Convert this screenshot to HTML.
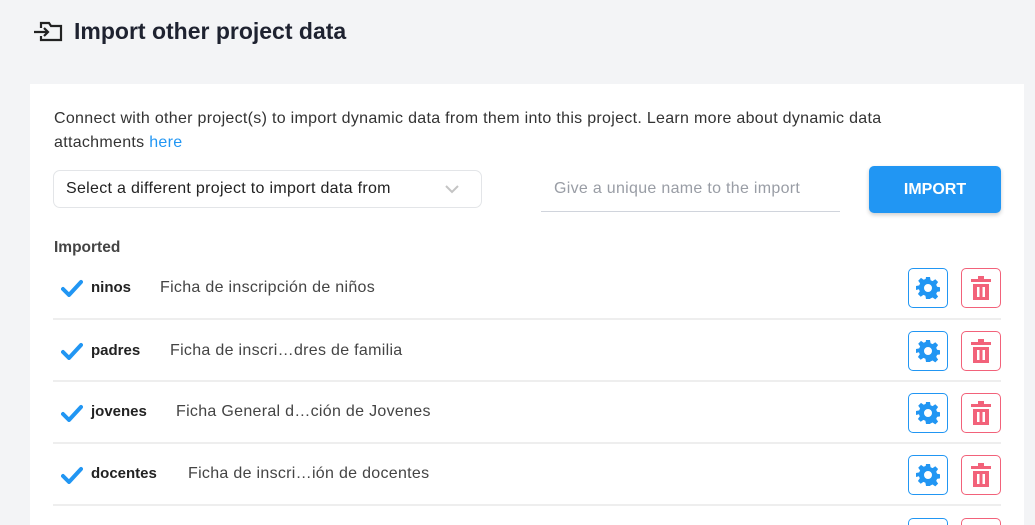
<!DOCTYPE html>
<html><head><meta charset="utf-8"><style>
*{margin:0;padding:0;box-sizing:border-box}
html,body{width:1035px;height:525px;overflow:hidden}
body{background:#f3f4f6;font-family:"Liberation Sans",sans-serif;position:relative;color:#333}
.a{position:absolute}
.card{left:30px;top:84px;width:994px;height:441px;background:#fff}
.sep{left:53px;width:948px;height:2px;background:#eeeeee}
.btn{width:40px;height:40px;border-radius:5px;border:1px solid;display:flex;align-items:center;justify-content:center}
.g{left:908px;border-color:#2196f3}
.t{left:961px;border-color:#f2627a}
.name{font-size:15px;font-weight:bold;color:#222}
.w{font-size:16px;letter-spacing:.3px}
.desc{color:#444}
</style></head><body>
<svg class="a" style="left:33px;top:21px" width="32" height="24" viewBox="0 0 32 24" fill="none" stroke="#222" stroke-width="2.2"><path d="M1 11h14M11 7l4 4-4 4"/><path d="M8 7V2h8l2 3h10v14H8v-4"/></svg>
<div class="a" style="left:74px;top:18px;font-size:23px;font-weight:bold;color:#1e2230">Import other project data</div>
<div class="a card"></div>
<div class="a w" style="left:54px;top:107px;width:880px;line-height:24px;color:#333">Connect with other project(s) to import dynamic data from them into this project. Learn more about dynamic data attachments <span style="color:#2196f3">here</span></div>
<div class="a" style="left:53px;top:170px;width:429px;height:38px;border:1px solid #e3e5e8;border-radius:7px"></div>
<div class="a w" style="left:66px;top:180px;color:#222">Select a different project to import data from</div>
<svg class="a" style="left:445px;top:185px" width="14" height="9" viewBox="0 0 14 9" fill="none" stroke="#c4c4c4" stroke-width="2"><path d="M1 1l6 6 6-6"/></svg>
<div class="a w" style="left:554px;top:180px;color:#999da5">Give a unique name to the import</div>
<div class="a" style="left:541px;top:211px;width:299px;height:1px;background:#d0d4dc"></div>
<div class="a" style="left:869px;top:166px;width:132px;height:47px;background:#2196f3;border-radius:5px;box-shadow:0 2px 4px rgba(0,0,0,.2);color:#fff;font-weight:bold;font-size:16px;display:flex;align-items:center;justify-content:center">IMPORT</div>
<div class="a" style="left:54px;top:239px;font-size:15.5px;font-weight:bold;color:#444">Imported</div>

<div class="a sep" style="top:318px"></div>
<div class="a sep" style="top:380px"></div>
<div class="a sep" style="top:442px"></div>
<div class="a sep" style="top:504px"></div>

<svg width="0" height="0" style="position:absolute"><defs>
<symbol id="ck" viewBox="0 0 22 18"><path d="M2 10l6 6L20 3" fill="none" stroke="#2196f3" stroke-width="4" stroke-linecap="round" stroke-linejoin="round"/></symbol>
<symbol id="gear" viewBox="0 0 24 24"><path fill="#2196f3" d="M10 1h4l.6 3.2 2 .9 2.7-1.9 2.8 2.8-1.9 2.7.9 2 3.2.6v4l-3.2.6-.9 2 1.9 2.7-2.8 2.8-2.7-1.9-2 .9L14 23h-4l-.6-3.2-2-.9-2.7 1.9-2.8-2.8 1.9-2.7-.9-2L0 14v-4l3.2-.6.9-2L2.2 4.7 5 1.9l2.7 1.9 2-.9zM12 8a4 4 0 100 8 4 4 0 000-8z"/></symbol>
<symbol id="tr" viewBox="0 0 20 24"><rect x="0" y="3" width="20" height="3" fill="#f2627a"/><rect x="7" y="0" width="6" height="3" fill="#f2627a"/><path fill="#f2627a" d="M2 8h16v16H2zM6 11v10h2.5V11zM11.5 11v10H14V11z" fill-rule="evenodd"/></symbol>
</defs></svg>

<div class="a" style="left:0;top:268px;width:1035px;height:40px">
<svg class="a" style="left:61px;top:11px" width="22" height="18"><use href="#ck"/></svg>
<div class="a name" style="left:91px;top:11px">ninos</div>
<div class="a w desc" style="left:160px;top:11px">Ficha de inscripción de niños</div>
<div class="a btn g" style="top:0"><svg width="24" height="24"><use href="#gear"/></svg></div>
<div class="a btn t" style="top:0"><svg width="20" height="24"><use href="#tr"/></svg></div>
</div>
<div class="a" style="left:0;top:331px;width:1035px;height:40px">
<svg class="a" style="left:61px;top:11px" width="22" height="18"><use href="#ck"/></svg>
<div class="a name" style="left:91px;top:11px">padres</div>
<div class="a w desc" style="left:170px;top:11px">Ficha de inscri…dres de familia</div>
<div class="a btn g" style="top:0"><svg width="24" height="24"><use href="#gear"/></svg></div>
<div class="a btn t" style="top:0"><svg width="20" height="24"><use href="#tr"/></svg></div>
</div>
<div class="a" style="left:0;top:393px;width:1035px;height:40px">
<svg class="a" style="left:61px;top:11px" width="22" height="18"><use href="#ck"/></svg>
<div class="a name" style="left:91px;top:10px">jovenes</div>
<div class="a w desc" style="left:176px;top:10px">Ficha General d…ción de Jovenes</div>
<div class="a btn g" style="top:0"><svg width="24" height="24"><use href="#gear"/></svg></div>
<div class="a btn t" style="top:0"><svg width="20" height="24"><use href="#tr"/></svg></div>
</div>
<div class="a" style="left:0;top:455px;width:1035px;height:40px">
<svg class="a" style="left:61px;top:11px" width="22" height="18"><use href="#ck"/></svg>
<div class="a name" style="left:91px;top:10px">docentes</div>
<div class="a w desc" style="left:188px;top:10px">Ficha de inscri…ión de docentes</div>
<div class="a btn g" style="top:0"><svg width="24" height="24"><use href="#gear"/></svg></div>
<div class="a btn t" style="top:0"><svg width="20" height="24"><use href="#tr"/></svg></div>
</div>
<div class="a" style="left:908px;top:518px;width:40px;height:7px;border:1px solid #2196f3;border-bottom:none;border-radius:5px 5px 0 0"></div>
<div class="a" style="left:961px;top:518px;width:40px;height:7px;border:1px solid #f2627a;border-bottom:none;border-radius:5px 5px 0 0"></div>
</body></html>
